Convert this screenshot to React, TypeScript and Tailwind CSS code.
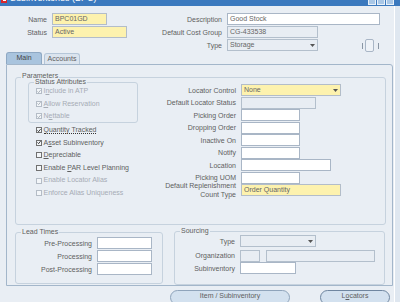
import React from "react";

type Kind = "yellow" | "white" | "gray";

const KIND: Record<Kind, string> = {
  yellow: "bg-[#fdf2ae] border-[#b3bdc9]",
  white: "bg-white border-[#a9b6c6]",
  gray: "bg-[#e8edf3] border-[#b3bfcc]",
};

function Arrow() {
  return (
    <svg width="5" height="3" viewBox="0 0 5 3" className="ml-auto mr-[2px] shrink-0">
      <path d="M0 0h5L2.5 3z" fill="#555" />
    </svg>
  );
}

function Field({
  kind = "white",
  className = "",
  text,
  drop,
}: {
  kind?: Kind;
  className?: string;
  text?: string;
  drop?: boolean;
}) {
  return (
    <div
      className={`flex h-[12px] shrink-0 items-center overflow-hidden whitespace-nowrap border pl-[2px] text-[7px] text-[#666] ${KIND[kind]} ${className}`}
    >
      {text && <span>{text}</span>}
      {drop && <Arrow />}
    </div>
  );
}

function Group({
  title,
  className = "",
  top = "-top-[5px]",
  children,
}: {
  title: string;
  className?: string;
  top?: string;
  children?: React.ReactNode;
}) {
  return (
    <div className={`relative rounded-[3px] border border-[#c6d2de] ${className}`}>
      <span className={`absolute ${top} left-[5px] bg-[#e9eef4] px-[1px] leading-[8px] text-[#5e5e5e]`}>{title}</span>
      {children}
    </div>
  );
}

function Check({
  label,
  checked,
  disabled,
  className = "h-[12.6px]",
}: {
  label: React.ReactNode;
  checked?: boolean;
  disabled?: boolean;
  className?: string;
}) {
  return (
    <div className={`flex items-center ${className}`}>
      <span
        className={`flex h-[6px] w-[6px] items-center justify-center border bg-[#f3f6f9] ${
          disabled ? "border-[#b4bcc6]" : "border-[#707070]"
        }`}
      >
        {checked && (
          <svg width="5" height="5" viewBox="0 0 5 5">
            <path d="M0.6 2.4 L2 3.9 L4.5 0.8" fill="none" stroke={disabled ? "#9aa3ad" : "#111"} strokeWidth="1" />
          </svg>
        )}
      </span>
      <span className={`ml-[1.5px] whitespace-nowrap ${disabled ? "text-[#a6acb4]" : "text-[#5e5e5e]"}`}>{label}</span>
    </div>
  );
}

function Row({ label, children, lw = "w-[91px]" }: { label: React.ReactNode; children: React.ReactNode; lw?: string }) {
  return (
    <div className="flex h-[12.5px] items-center">
      <span className={`${lw} shrink-0 whitespace-nowrap pr-[5px] text-right leading-[9px] text-[#5e5e5e]`}>{label}</span>
      {children}
    </div>
  );
}

const u = (s: string) => <span className="underline underline-offset-1">{s}</span>;

export default function App() {
  return (
    <div className="flex h-[302px] w-[400px] flex-col overflow-hidden bg-[#e9eef4] font-['Liberation_Sans',Arial,sans-serif] text-[7px] text-[#5e5e5e]">
      {/* title bar, cut off at the top */}
      <div className="flex h-[6px] shrink-0 items-end overflow-hidden bg-[#3b79be]">
        <div className="flex h-[14px] w-full items-center">
          <span className="ml-[1px] flex h-[8px] w-[6px] items-center justify-center bg-[#d8262b]">
            <span className="h-[4px] w-[3px] bg-white" />
          </span>
          <span className="ml-[3px] text-[9px] text-white">Subinventories (BPC)</span>
          <div className="ml-auto mr-[6px] flex gap-[1px] self-end pb-[1px]">
            <span className="h-[7px] w-[8px] border border-[#e8f0f8] bg-[#a9c7e6]" />
            <span className="h-[7px] w-[8px] border border-[#e8f0f8] bg-[#a9c7e6]" />
            <span className="h-[7px] w-[8px] border border-[#e8f0f8] bg-[#a9c7e6]" />
          </div>
        </div>
      </div>

      <div className="flex flex-1">
        <div className="w-[394px] shrink-0">
          {/* header fields */}
          <div className="pt-[7px]">
            <div className="flex h-[13px] items-start">
              <span className="w-[47px] pt-[2px] text-right">Name</span>
              <div className="ml-[5px] w-[80px]">
                <Field kind="yellow" className="w-[55px]" text="BPC01GD" />
              </div>
              <span className="w-[90px] pt-[2px] text-right">Description</span>
              <Field className="ml-[5px] w-[153px]" text="Good Stock" />
            </div>
            <div className="flex h-[13px] items-start">
              <span className="w-[47px] pt-[2px] text-right">Status</span>
              <div className="ml-[5px] w-[80px]">
                <Field kind="yellow" className="w-[75px]" text="Active" />
              </div>
              <span className="w-[90px] pt-[2px] text-right">Default Cost Group</span>
              <Field kind="gray" className="ml-[5px] w-[91px]" text="CG-433538" />
            </div>
            <div className="flex h-[13px] items-start">
              <span className="w-[222px] pt-[2px] text-right">Type</span>
              <Field kind="gray" className="ml-[5px] w-[91px]" text="Storage" drop />
              <div className="ml-[44px] flex h-[13px] items-center">
                <span className="h-[6px] w-px bg-[#8a96a4]" />
                <span className="ml-[2px] h-[13px] w-[9px] rounded-[2px] border border-[#a9b6c6] bg-[#eef2f7]" />
                <span className="ml-[4px] h-[6px] w-px bg-[#8a96a4]" />
              </div>
            </div>
          </div>

          {/* tabs */}
          <div className="flex items-end gap-[2px] pl-[6px]">
            <div className="flex h-[12px] w-[36px] items-center justify-center rounded-t-[3px] border border-b-0 border-[#8ea8c3] bg-[#a9c4de] text-[#444]">
              Main
            </div>
            <div className="flex h-[11px] w-[36px] items-center justify-center rounded-t-[3px] border border-b-0 border-[#b5c6d8] bg-[#dbe4ee] text-[#5e5e5e]">
              Accounts
            </div>
          </div>

          {/* tab panel */}
          <div className="ml-[6px] h-[222px] w-[387px] rounded-tr-[3px] border border-[#a3b6ca] pl-[8px] pt-[12px]">
            <Group title="Parameters" top="-top-[6px]" className="h-[148px] w-[371px]">
              <div className="flex">
                <div className="w-[134px] shrink-0">
                  <Group title="Status Attributes" className="ml-[12px] mt-[4px] h-[41px] w-[110px] pl-[7px] pt-[2px]">
                    <Check className="h-[12.5px]" checked disabled label={<>I{u("n")}clude in ATP</>} />
                    <Check className="h-[12.5px]" checked disabled label={<>{u("A")}llow Reservation</>} />
                    <Check className="h-[12.5px]" checked disabled label={<>N{u("e")}ttable</>} />
                  </Group>
                  <div className="ml-[20px] mt-[1px]">
                    <Check
                      checked
                      label={<span className="border-b border-dotted border-[#333]">Quantity Tracked</span>}
                    />
                    <Check checked label={<>A{u("s")}set Subinventory</>} />
                    <Check label={<>{u("D")}epreciable</>} />
                    <Check label={<>Enable {u("P")}AR Level Planning</>} />
                    <Check disabled label="Enable Locator Alias" />
                    <Check disabled label="Enforce Alias Uniqueness" />
                  </div>
                </div>
                <div className="pt-[6px]">
                  <Row label="Locator Control">
                    <Field kind="yellow" className="w-[100px]" text="None" drop />
                  </Row>
                  <Row label="Default Locator Status">
                    <Field kind="gray" className="w-[75px]" />
                  </Row>
                  <Row label="Picking Order">
                    <Field className="w-[59px]" />
                  </Row>
                  <Row label="Dropping Order">
                    <Field className="w-[59px]" />
                  </Row>
                  <Row label="Inactive On">
                    <Field className="w-[59px]" />
                  </Row>
                  <Row label="Notify">
                    <Field className="w-[59px]" />
                  </Row>
                  <Row label="Location">
                    <Field className="w-[90px]" />
                  </Row>
                  <Row label="Picking UOM">
                    <Field className="w-[59px]" />
                  </Row>
                  <Row
                    label={
                      <>
                        Default Replenishment
                        <br />
                        Count Type
                      </>
                    }
                  >
                    <Field kind="yellow" className="w-[100px]" text="Order Quantity" />
                  </Row>
                </div>
              </div>
            </Group>

            <div className="mt-[6px] flex items-start">
              <Group title="Lead Times" className="mt-[1px] h-[52px] w-[148px] pt-[4px]">
                <div className="flex flex-col gap-[0.5px]">
                  <Row label="Pre-Processing" lw="w-[81px]">
                    <Field className="w-[55px]" />
                  </Row>
                  <Row label="Processing" lw="w-[81px]">
                    <Field className="w-[55px]" />
                  </Row>
                  <Row label="Post-Processing" lw="w-[81px]">
                    <Field className="w-[55px]" />
                  </Row>
                </div>
              </Group>
              <Group title="Sourcing" className="ml-[11px] h-[54px] w-[211px] pt-[3px]">
                <Row label="Type" lw="w-[65px]">
                  <Field kind="gray" className="w-[76px]" drop />
                </Row>
                <div className="mt-[2px]">
                  <Row label="Organization" lw="w-[65px]">
                    <Field kind="gray" className="w-[20px]" />
                    <Field kind="gray" className="ml-[6px] w-[109px]" />
                  </Row>
                </div>
                <Row label="Subinventory" lw="w-[65px]">
                  <Field className="w-[56px]" />
                </Row>
              </Group>
            </div>
          </div>

          {/* buttons */}
          <div className="mt-[4px] flex pl-[170px]">
            <div className="flex h-[15px] w-[120px] items-center justify-center rounded-full border border-[#8fa4bb] bg-[#d3e1ef] pb-[2px] text-[#5e5e5e]">
              Item / Subinventory
            </div>
            <div className="ml-[30px] flex h-[15px] w-[70px] items-center justify-center rounded-full border border-[#6f86a0] bg-[#d3e1ef] pb-[2px] text-[#5e5e5e]">
              L{u("o")}cators
            </div>
          </div>
        </div>
        <div className="flex-1 border-l border-white bg-[#dfe7f0]" />
      </div>
    </div>
  );
}
